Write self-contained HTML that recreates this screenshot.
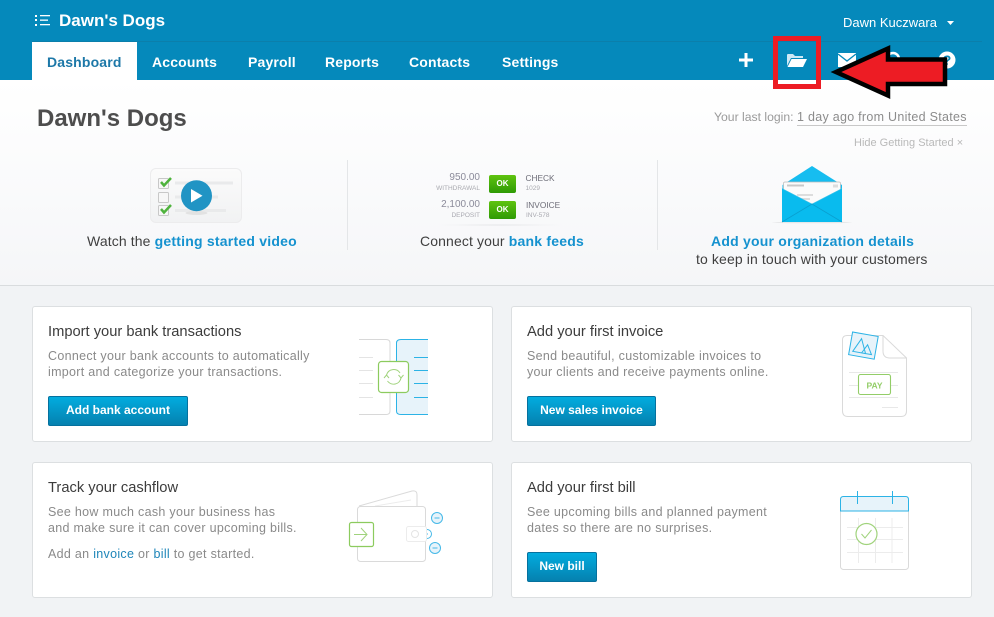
<!DOCTYPE html>
<html><head><meta charset="utf-8"><style>
html,body{margin:0;padding:0}
body{width:994px;height:617px;overflow:hidden;position:relative;background:#f1f3f5;font-family:"Liberation Sans",sans-serif;color:#4a4a4a}
.a{position:absolute;white-space:nowrap}
#top{left:0;top:0;width:994px;height:80px;background:#0589bb}
.nav{top:52.5px;font-size:14px;font-weight:bold;color:#fff;letter-spacing:.16px;line-height:18px}
.blue{color:#1592cf;font-weight:bold;letter-spacing:.22px}
.cap{font-size:14px;line-height:18px;color:#3f3f3f;letter-spacing:.12px}
.card{background:#fff;border:1px solid #dcdfe1;border-radius:3px;box-sizing:border-box}
.t{font-size:14.7px;color:#3c3c3c;line-height:18px}
.d{font-size:12.5px;color:#8a8a8a;line-height:16px;letter-spacing:.3px}
.btn{height:30px;box-sizing:border-box;border:1px solid #05719e;border-radius:2px;background:linear-gradient(#02acdf,#0581af);color:#fff;font-weight:bold;font-size:12px;line-height:27px;text-align:center}
svg{position:absolute;overflow:visible}
</style></head><body>
<div class="a" id="top"></div>
<div class="a" style="left:32px;top:41px;width:950px;height:1px;background:#0b7fab"></div>
<svg style="left:34px;top:14px" width="16" height="12"><g fill="#fff"><rect x="1" y="1" width="2" height="2"/><rect x="1" y="5" width="2" height="2"/><rect x="1" y="10" width="2" height="2"/><rect x="6" y="1" width="10" height="1.3"/><rect x="6" y="5.5" width="8" height="1.3"/><rect x="6" y="10" width="10" height="1.3"/></g></svg>
<div class="a" style="left:59px;top:10px;font-size:17px;font-weight:bold;color:#fff;line-height:21px">Dawn's Dogs</div>
<div class="a" style="left:843px;top:15px;font-size:13px;color:#fff;line-height:16px">Dawn Kuczwara</div>
<svg style="left:947px;top:21px" width="8" height="5"><path d="M0 0H7L3.5 4Z" fill="#fff"/></svg>
<div class="a" style="left:32px;top:42px;width:105px;height:38px;background:#fff"></div>
<div class="a nav" style="left:47px;color:#1d78a8">Dashboard</div>
<div class="a nav" style="left:152px">Accounts</div>
<div class="a nav" style="left:248px">Payroll</div>
<div class="a nav" style="left:325px">Reports</div>
<div class="a nav" style="left:409px">Contacts</div>
<div class="a nav" style="left:502px">Settings</div>
<svg style="left:738px;top:52px" width="16" height="16"><path d="M8 1V15M1 8H15" stroke="#fff" stroke-width="3"/></svg>
<svg style="left:786px;top:52px" width="22" height="16"><path d="M1 14V3Q1 2 2 2H7L9 4H17V6H5L1 14Z" fill="#cfe9f5"/><path d="M5.500 7H21L17 15H1.500Z" fill="#fff"/></svg>
<svg style="left:838px;top:53px" width="18" height="14"><rect width="18" height="14" fill="#fff"/><path d="M0 1L9 8L18 1" fill="none" stroke="#0589bb" stroke-width="1.300"/></svg>
<svg style="left:885px;top:51px" width="16" height="16"><circle cx="8" cy="8" r="6" fill="none" stroke="#fff" stroke-width="2.500"/></svg>
<svg style="left:938px;top:51px" width="18" height="18"><circle cx="9" cy="9" r="8.500" fill="#fff"/><text x="9" y="14" font-size="14" font-weight="bold" text-anchor="middle" fill="#0589bb" font-family="Liberation Sans">?</text></svg>

<div class="a" style="left:0;top:80px;width:994px;height:206px;background:linear-gradient(#fff,#f5f6f8);border-bottom:1px solid #d9dcde;box-sizing:border-box"></div>
<div class="a" style="left:37px;top:104px;font-size:24px;font-weight:bold;color:#4d4d4d;line-height:30px">Dawn's Dogs</div>
<div class="a" style="left:714px;top:110px;font-size:12.2px;color:#9a9a9a;line-height:15px">Your last login:</div>
<div class="a" style="left:797px;top:110px;font-size:12.500px;color:#8c8c8c;line-height:15px;letter-spacing:.28px;border-bottom:1px solid #c8c8c8">1 day ago from United States</div>
<div class="a" style="left:854px;top:136px;font-size:11px;color:#b9b9b9;line-height:14px">Hide Getting Started ×</div>

<div class="a" style="left:347px;top:160px;width:1px;height:90px;background:#e4e6e8"></div>
<div class="a" style="left:657px;top:160px;width:1px;height:90px;background:#e4e6e8"></div>

<!-- video -->
<div class="a" style="left:150px;top:168px;width:92px;height:55px;border-radius:6px;background:linear-gradient(#fbfbfb,#f1f2f3);border:1px solid #ececed;box-sizing:border-box"></div>
<svg style="left:150px;top:168px" width="92" height="55">
<g fill="#e9eaeb"><rect x="25" y="13.500" width="58" height="3"/><rect x="25" y="27.500" width="43" height="3"/><rect x="25" y="41" width="51" height="3"/></g>
<g fill="#f7f7f7" stroke="#c8c8c8"><rect x="8.500" y="10.500" width="10" height="10" rx="1"/><rect x="8.500" y="24.500" width="10" height="10" rx="1"/><rect x="8.500" y="37.500" width="10" height="10" rx="1"/></g>
<path d="M11 14L14 17.500L21 10M11 41L14 44.500L21 37" fill="none" stroke="#4fb33d" stroke-width="2.500"/>
<ellipse cx="46.500" cy="45" rx="11" ry="2" fill="#e2e2e2"/>
<circle cx="46.500" cy="27.700" r="15.500" fill="#2194c4"/><path d="M41 21V34.500L52.500 27.700Z" fill="#fff"/></svg>
<div class="a cap" style="left:87px;top:232px">Watch the <span class="blue">getting started video</span></div>

<!-- bank -->
<div class="a" style="left:420px;top:172px;width:60px;text-align:right;font-size:10px;color:#8b8b9a;line-height:12px">950.00</div>
<div class="a" style="left:420px;top:185px;width:60px;text-align:right;font-size:6.500px;color:#a9a9b0;line-height:8px">WITHDRAWAL</div>
<div class="a" style="left:420px;top:199px;width:60px;text-align:right;font-size:10px;color:#8b8b9a;line-height:12px">2,100.00</div>
<div class="a" style="left:420px;top:212px;width:60px;text-align:right;font-size:6.500px;color:#a9a9b0;line-height:8px">DEPOSIT</div>
<div class="a" style="left:489px;top:175px;width:27px;height:18px;border-radius:2px;background:linear-gradient(#5fc30f,#2f9a05);color:#fff;font-size:8px;font-weight:bold;text-align:center;line-height:18px">OK</div>
<div class="a" style="left:489px;top:200.500px;width:27px;height:18px;border-radius:2px;background:linear-gradient(#5fc30f,#2f9a05);color:#fff;font-size:8px;font-weight:bold;text-align:center;line-height:18px">OK</div>
<div class="a" style="left:525.500px;top:172px;font-size:8.300px;color:#6d6d78;line-height:12px">CHECK</div>
<div class="a" style="left:525.500px;top:185px;font-size:6.500px;color:#a9a9b0;line-height:8px">1029</div>
<div class="a" style="left:526px;top:199px;font-size:8.300px;color:#6d6d78;line-height:12px">INVOICE</div>
<div class="a" style="left:526px;top:212px;font-size:6.500px;color:#a9a9b0;line-height:8px">INV-578</div>
<div class="a" style="left:435px;top:224px;width:130px;height:2px;background:radial-gradient(ellipse,#e4e5e7,transparent 70%)"></div>
<div class="a cap" style="left:420px;top:232px">Connect your <span class="blue">bank feeds</span></div>

<!-- envelope -->
<svg style="left:770px;top:165px" width="84" height="60">
<ellipse cx="42" cy="57.500" rx="40" ry=".8" fill="#e6e7e8"/>
<path d="M12.500 20L42 1L72 20V35H12.500Z" fill="#16bdf0"/>
<rect x="13.500" y="17" width="57" height="24" rx="1.500" fill="#fbfbfb" stroke="#bbb" stroke-width=".7"/>
<rect x="17" y="19.500" width="17" height="2" fill="#c8c8c8"/><rect x="63" y="19.500" width="5" height="3" fill="#ddd"/>
<rect x="27" y="29" width="16" height="2" fill="#ddd"/><rect x="27" y="33" width="13" height="2" fill="#ddd"/>
<path d="M12 23.500L42 39L72 23.500V57H12Z" fill="#09bbee"/>
<path d="M12 23.500L42 39L72 23.500" fill="none" stroke="#3fc4ea" stroke-width=".6"/>
<path d="M12 57L42 39L72 57" fill="none" stroke="#0a9fcf" stroke-width=".8"/>
</svg>
<div class="a blue" style="left:711px;top:232px;font-size:14px;line-height:18px">Add your organization details</div>
<div class="a cap" style="left:696px;top:250px">to keep in touch with your customers</div>

<!-- cards -->
<div class="a card" style="left:32px;top:306px;width:461px;height:136px"></div>
<div class="a card" style="left:511px;top:306px;width:461px;height:136px"></div>
<div class="a card" style="left:32px;top:462px;width:461px;height:136px"></div>
<div class="a card" style="left:511px;top:462px;width:461px;height:136px"></div>

<div class="a t" style="left:48px;top:323px">Import your bank transactions</div>
<div class="a d" style="left:48px;top:348px">Connect your bank accounts to automatically<br>import and categorize your transactions.</div>
<div class="a btn" style="left:48px;top:396px;width:140px">Add bank account</div>

<div class="a t" style="left:527px;top:323px">Add your first invoice</div>
<div class="a d" style="left:527px;top:348px">Send beautiful, customizable invoices to<br>your clients and receive payments online.</div>
<div class="a btn" style="left:527px;top:396px;width:129px">New sales invoice</div>

<div class="a t" style="left:48px;top:479px">Track your cashflow</div>
<div class="a d" style="left:48px;top:504px">See how much cash your business has<br>and make sure it can cover upcoming bills.</div>
<div class="a d" style="left:48px;top:546px">Add an <span style="color:#1f86b9">invoice</span> or <span style="color:#1f86b9">bill</span> to get started.</div>

<div class="a t" style="left:527px;top:479px">Add your first bill</div>
<div class="a d" style="left:527px;top:504px">See upcoming bills and planned payment<br>dates so there are no surprises.</div>
<div class="a btn" style="left:527px;top:552px;width:70px">New bill</div>

<!-- bank illustration -->
<svg style="left:340px;top:325px" width="110" height="100" fill="none">
<path d="M19 14.500H46Q50 14.500 50 18V86Q50 89.500 46 89.500H19" stroke="#d8d8d8"/>
<path d="M19 32.500H33M19 45.500H33M19 58.500H33M19 72.500H33" stroke="#e4e4e4"/>
<path d="M88 14.500H61Q56.500 14.500 56.500 18V86Q56.500 89.500 61 89.500H88Z" fill="#e7f3fa" stroke="none"/>
<path d="M88 14.500H61Q56.500 14.500 56.500 18V86Q56.500 89.500 61 89.500H88" stroke="#2cb3e6"/>
<path d="M74 32.500H88M74 45.500H88M74 58.500H88M74 72.500H88" stroke="#2cb3e6"/>
<rect x="38.500" y="36.500" width="30" height="31" rx="3" fill="#fff" stroke="#8ccb5e" stroke-width="1.200"/>
<path d="M46.500 50A7.500 7.500 0 0 1 60 48M61 53A7.500 7.500 0 0 1 47.500 56" stroke="#a0d37c"/>
<path d="M44 53L46.500 50L49 53M58.500 50L61 53L63.500 50" stroke="#a0d37c"/>
</svg>

<!-- invoice illustration -->
<svg style="left:830px;top:325px" width="90" height="100" fill="none">
<path d="M17 10.500H53L76.500 33V86Q76.500 91.500 71 91.500H18Q12.500 91.500 12.500 86V15Q12.500 10.500 17 10.500Z" fill="#fff" stroke="#dadada"/>
<path d="M53 10.500V26Q53 33 60 33H76.500" stroke="#dadada"/>
<path d="M19 47.500H68M19 60.500H68M19 72.500H68M52 82.500H68" stroke="#e8e8e8"/>
<rect x="28.500" y="49.500" width="32" height="20" rx="2" fill="#fff" stroke="#93cd68" stroke-width="1.100"/>
<text x="44.500" y="63.500" font-size="8.500" font-weight="bold" fill="#93cd68" text-anchor="middle" font-family="Liberation Sans">PAY</text>
<g transform="rotate(10 33 20)"><rect x="20.500" y="9" width="26" height="23" fill="#e7f3fa" stroke="#2cb3e6"/><path d="M24 28L30.500 14L37 28Z M33 28L37.500 19L43 28Z" stroke="#2cb3e6"/></g>
</svg>

<!-- wallet illustration -->
<svg style="left:340px;top:485px" width="110" height="85" fill="none">
<path d="M19 21L72 6Q77 5 77 10V22" stroke="#dadada"/>
<path d="M35 21L71 15" stroke="#ececec"/>
<rect x="17.500" y="21.500" width="68" height="55" rx="3" fill="#fff" stroke="#dadada"/>
<circle cx="87" cy="49" r="4.500" fill="#fff" stroke="#46b9e8"/><path d="M85 49H88" stroke="#46b9e8"/>
<rect x="66.500" y="41.500" width="20" height="15" rx="2" fill="#fff" stroke="#ececec"/>
<circle cx="75" cy="49" r="3.500" stroke="#e4e4e4"/>
<circle cx="97" cy="33" r="5.500" fill="#e7f3fa" stroke="#46b9e8"/><path d="M94.500 33H99.500" stroke="#46b9e8"/>
<circle cx="95" cy="63" r="5.500" fill="#e7f3fa" stroke="#46b9e8"/><path d="M92.500 63H97.500" stroke="#46b9e8"/>
<rect x="9.500" y="37.500" width="24" height="24" rx="2" fill="#fff" stroke="#8ccb5e" stroke-width="1.200"/>
<path d="M14 49.500H27M21 43L27 49.500L21 56" stroke="#a0d37c"/>
</svg>

<!-- calendar illustration -->
<svg style="left:830px;top:485px" width="90" height="90" fill="none">
<rect x="10.500" y="11.500" width="68" height="73" rx="3" fill="#fff" stroke="#dadada"/>
<path d="M10.500 26V14.500Q10.500 11.500 13.500 11.500H75.500Q78.500 11.500 78.500 14.500V26Z" fill="#e7f3fa" stroke="#2cb3e6"/>
<path d="M27.500 6V19M62.500 6V19" stroke="#2cb3e6"/>
<path d="M17 42.500H73M17 54.500H73M17 67.500H73M28.500 33V78M45.500 33V78M62 33V78" stroke="#ececec"/>
<circle cx="36.500" cy="49" r="10.500" fill="#fff" stroke="#a0d37c" stroke-width="1.200"/>
<path d="M31.500 49L35 53L41.500 45" stroke="#a0d37c"/>
</svg>

<!-- annotations -->
<div class="a" style="left:773px;top:36px;width:48px;height:53px;box-sizing:border-box;border:5px solid #ed1c24"></div>
<svg style="left:0;top:0" width="994" height="617"><path d="M836 72L888 48.500V59.500H945V84H888V95.500Z" fill="#ed1c24" stroke="#000" stroke-width="4.500"/></svg>
</body></html>
